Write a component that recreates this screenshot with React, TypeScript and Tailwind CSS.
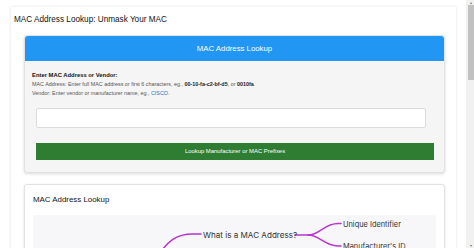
import React from 'react';

// Mind map preview inside the info card
function MindMap() {
  return (
    <svg width="403" height="40" viewBox="0 0 403 40" className="block">
      <g fill="none" stroke="#b935d0" strokeWidth={1.6} strokeLinecap="round">
        <path d="M 122 46 C 134 25, 144 19, 160 19 L 168 19" />
        <path d="M 262 20 L 275 20 C 287 20, 291 8.5, 305 8.5 L 308 8.5" />
        <path d="M 275 20 C 287 20, 291 31, 305 31 L 308 31" />
      </g>
      <g fill="#333" style={{ fontFamily: 'Inter, "Noto Sans", sans-serif' }}>
        <text x="170" y="22.5" fontSize="8.1">What is a MAC Address?</text>
        <text x="310" y="11.5" fontSize="7.4">Unique Identifier</text>
        <text x="310" y="34" fontSize="7.4">Manufacturer's ID</text>
      </g>
    </svg>
  );
}

export default function App() {
  return (
    <div className="flex h-[248px] w-[474px] overflow-hidden bg-white text-[#222] font-['Liberation_Sans',Arial,sans-serif]">
      {/* Page */}
      <div className="flex-1 pl-[11px] pr-[10px] pt-[7px]">
        <div className="h-[260px] bg-white shadow-[0_0_3px_rgba(0,0,0,0.12)]">
          <h1 className="px-[3px] pt-[8px] text-[8.2px] leading-[10px] text-[#111]">
            MAC Address Lookup: Unmask Your MAC
          </h1>

          {/* Lookup form card */}
          <div className="ml-[13px] mr-[11px] mt-[10px] rounded-[3px] border border-[#e2e2e2] bg-[#f5f5f5] shadow-[0_1px_3px_rgba(0,0,0,0.15)]">
            <div className="flex h-[25px] items-center justify-center rounded-t-[3px] bg-[#2196f3] text-[7.8px] text-white">
              MAC Address Lookup
            </div>
            <div className="px-[7px] pb-[12px] pt-[10px]">
              <div className="text-[5.85px] font-bold leading-[9px] text-[#111]">
                Enter MAC Address or Vendor:
              </div>
              <div className="text-[5.4px] leading-[9px] text-[#555]">
                MAC Address: Enter full MAC address or first 6 characters, eg.,{' '}
                <b className="text-[#222]">00-10-fa-c2-bf-d5</b>, or <b className="text-[#222]">0010fa</b>.
              </div>
              <div className="text-[5.4px] leading-[9px] text-[#555]">
                Vendor: Enter vendor or manufacturer name, eg.,{' '}
                <span className="text-[#1e73c8]">CISCO</span>.
              </div>
              <div className="ml-[4px] mt-[10px] h-[20px] w-[390px] rounded-[2px] border border-[#dcdcdc] bg-white" />
              <div className="ml-[4px] mt-[15px] flex h-[17px] w-[398px] items-center justify-center bg-[#2e7d32] text-[5.9px] text-white">
                Lookup Manufacturer or MAC Prefixes
              </div>
            </div>
          </div>

          {/* Info card */}
          <div className="ml-[13px] mr-[11px] mt-[11px] h-[80px] rounded-[3px] border border-[#e2e2e2] bg-white px-[8px] shadow-[0_1px_3px_rgba(0,0,0,0.12)]">
            <h2 className="pt-[10px] text-[7.9px] leading-[10px] text-[#111]">MAC Address Lookup</h2>
            <div className="mt-[10px] h-[60px] rounded-[2px] bg-[#f7f7f9]">
              <MindMap />
            </div>
          </div>
        </div>
      </div>

      {/* Scrollbar */}
      <div className="flex w-[8px] flex-col bg-[#f1f1f1] pl-[2px]">
        <div className="h-[5px] text-center text-[4px] leading-[5px] text-[#777]">▴</div>
        <div className="h-[75px] w-[6px] bg-[#c1c1c1]" />
        <div className="flex-1" />
        <div className="h-[5px] text-center text-[4px] leading-[5px] text-[#777]">▾</div>
      </div>
    </div>
  );
}
